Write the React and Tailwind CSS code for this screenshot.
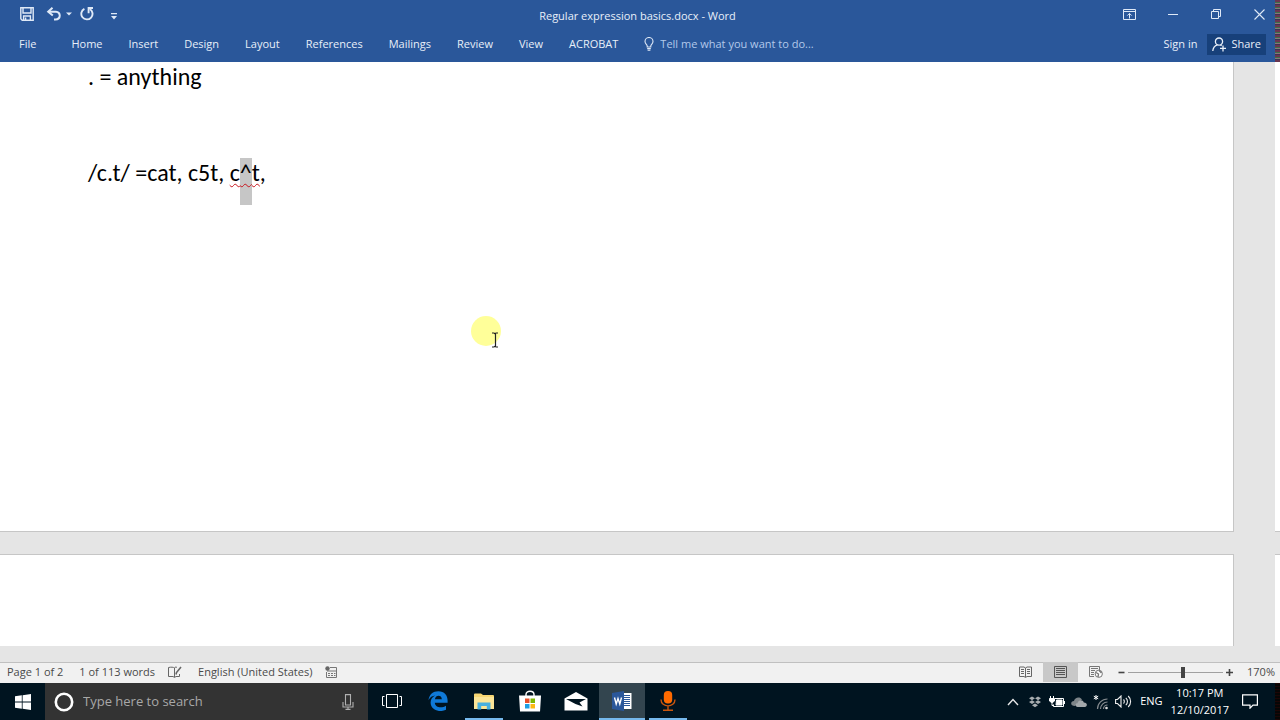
import { useState } from 'react';

const TABS = ['Home', 'Insert', 'Design', 'Layout', 'References', 'Mailings', 'Review', 'View', 'ACROBAT'];

function QuickAccess() {
  return (
    <div className="flex items-center h-7 pl-5 text-[#dfe9f7]">
      <button aria-label="Save">
        <svg className="w-[14px] h-[14px]" viewBox="0 0 14 14" fill="none" stroke="currentColor" strokeWidth="1.4">
          <path d="M0.8 0.8H13.2V13.2H2.2L0.8 11.8Z" />
          <path d="M3 1V6H11V1M3.6 13V9H10.4V13M5.6 10.5V13" />
        </svg>
      </button>
      <button aria-label="Undo" className="ml-3">
        <svg className="w-[16px] h-[14px]" viewBox="0 0 16 14" fill="none" stroke="currentColor" strokeWidth="2">
          <path d="M6.5 0.8L2.2 4.8L6.8 8.6" />
          <path d="M2.6 4.8H10C15 4.8 15.2 12.4 9.4 12.4H8" />
        </svg>
      </button>
      <button aria-label="Undo options" className="ml-1">
        <svg className="w-[6px] h-[4px]" viewBox="0 0 6 4" fill="currentColor">
          <path d="M0 0.4H6L3 3.4Z" />
        </svg>
      </button>
      <button aria-label="Repeat" className="ml-2">
        <svg className="w-[14px] h-[14px]" viewBox="0 0 14 14" fill="none" stroke="currentColor" strokeWidth="1.9">
          <path d="M4.4 1.8A5.6 5.6 0 1 0 9.8 2" />
          <path d="M13 1H8.6V6.2" />
        </svg>
      </button>
      <button aria-label="Customize toolbar" className="ml-[17px] pt-1">
        <svg className="w-[6px] h-[7px]" viewBox="0 0 6 7" fill="currentColor">
          <path d="M0 0H6V1.2H0ZM0 3H6L3 6.4Z" />
        </svg>
      </button>
    </div>
  );
}

function WindowButtons() {
  return (
    <div className="flex items-center justify-end h-7 pr-[10px] text-[#dfe9f7]">
      <button aria-label="Ribbon display options">
        <svg className="w-[13px] h-[11px]" viewBox="0 0 13 11" fill="none" stroke="currentColor">
          <path d="M0.5 0.5H12.5V10.5H0.5ZM0.5 2.5H12.5M6.5 9.5V4.5M4.3 6.6L6.5 4.4L8.7 6.6" />
        </svg>
      </button>
      <button aria-label="Minimize" className="ml-8">
        <svg className="w-[10px] h-[10px]" viewBox="0 0 10 10" stroke="currentColor">
          <path d="M0 5.5H10" />
        </svg>
      </button>
      <button aria-label="Restore" className="ml-[33px]">
        <svg className="w-[10px] h-[10px]" viewBox="0 0 10 10" fill="none" stroke="currentColor">
          <path d="M0.5 2.5H7.5V9.5H0.5ZM2.5 2.5V0.5H9.5V7.5H7.5" />
        </svg>
      </button>
      <button aria-label="Close" className="ml-[33px]">
        <svg className="w-[11px] h-[11px]" viewBox="0 0 11 11" stroke="currentColor" strokeWidth="1.1">
          <path d="M0.5 0.5L10.5 10.5M10.5 0.5L0.5 10.5" />
        </svg>
      </button>
    </div>
  );
}

function Header() {
  return (
    <header className="flex bg-[#2a579a] text-[11px] leading-4 text-[#e8eff9]">
      <div className="flex-1 min-w-0 h-[62px]">
        <div className="grid grid-cols-[1fr_auto_1fr] h-8">
          <QuickAccess />
          <h1 className="pt-2">Regular expression basics.docx - Word</h1>
          <WindowButtons />
        </div>
        <div className="flex items-center h-6">
          <button className="ml-[19px] mr-[22px]">File</button>
          <nav className="flex">
            {TABS.map((t) => (
              <button key={t} className="px-[13px]">{t}</button>
            ))}
          </nav>
          <label className="flex items-center gap-[6px] ml-[13px] text-[#b3c9ea]">
            <svg className="w-[10px] h-[14px]" viewBox="0 0 10 14" fill="none" stroke="#dfe9f7" strokeWidth="1.1">
              <path d="M3.2 10V9C3.2 7.6 1 6.8 1 4.4A4 3.9 0 0 1 9 4.4C9 6.8 6.8 7.6 6.8 9V10ZM3.2 11.6H6.8M3.6 13.2H6.4" />
            </svg>
            <input
              type="text"
              aria-label="Tell me"
              placeholder="Tell me what you want to do..."
              className="w-48 bg-transparent placeholder:text-[#b3c9ea] outline-none"
            />
          </label>
          <button className="ml-auto mr-[10px]">Sign in</button>
          <button className="flex items-center gap-1 h-[21px] px-[5px] mr-[9px] bg-[#17407a]">
            <svg className="w-[15px] h-[15px]" viewBox="0 0 15 15" fill="none" stroke="currentColor" strokeWidth="1.3">
              <circle cx="7" cy="4.6" r="3.6" />
              <path d="M0.8 14C1 10.6 3 8.6 5.4 7.8M8.4 7.8L9.6 8.8M11 8.4V14.4M8 11.4H14" />
            </svg>
            Share
          </button>
        </div>
      </div>
      <div className="w-[5px] bg-[repeating-linear-gradient(#6a3550_0px_2px,#3f7046_2px_3px,#8a6f7c_3px_4px,#3c3550_4px_5px)]" />
    </header>
  );
}

function Document() {
  return (
    <main className="relative flex-1 min-h-0 flex flex-col gap-[22px] overflow-hidden bg-[#e5e5e5] font-[Carlito,Lato,sans-serif] text-[24px] leading-8 text-black">
      <div className="flex h-[470px] shrink-0">
        <article className="flex-1 bg-white border-r border-b border-[#c6c6c6] pl-[88px] -mt-px">
          <p className="h-24">. = anything</p>
          <p>
            /c.t/ =cat, c5t,{' '}
            <span className="underline decoration-wavy decoration-[#c8141c] decoration-1 underline-offset-2 [text-decoration-skip-ink:none]">
              c<span className="bg-[#c6c6c6] pb-[18px]">^</span>t
            </span>
            ,
          </p>
        </article>
        <div className="w-[41px]" />
        <div className="w-[5px] bg-white border-b border-[#c6c6c6]" />
      </div>
      <div className="flex flex-1">
        <article className="flex-1 bg-white border-r border-t border-[#c6c6c6]" />
        <div className="w-[41px]" />
        <div className="w-[5px] bg-white border-t border-[#c6c6c6]" />
      </div>
      <div className="absolute left-[471px] top-[254px] size-[30px] rounded-full bg-[#ffff99]" />
      <svg className="absolute left-[491px] top-[270px] w-[8px] h-[16px]" viewBox="0 0 8 16" fill="none" stroke="#222" strokeWidth="1.2">
        <path d="M1 1H3L4 1.8L5 1H7M4.5 1.5V14.5M1 15H3L4 14.2L5 15H7" />
      </svg>
    </main>
  );
}

function StatusBar() {
  const [zoom, setZoom] = useState(170);
  return (
    <div className="flex items-center h-[21px] shrink-0 pl-[7px] pr-[5px] pb-[2px] bg-[#f1f1f1] border-t border-[#c0c0c0] text-[11px] leading-4 text-[#4a4a4a]">
      <button>Page 1 of 2</button>
      <button className="ml-4">1 of 113 words</button>
      <button aria-label="Proofing" className="ml-[13px]">
        <svg className="w-[14px] h-[12px]" viewBox="0 0 14 12" fill="none" stroke="#666">
          <path d="M9 1.5C8 0.8 7 1 6.5 2C5.5 1 3 1 0.5 1.5V10.5H5L6.5 11.5L8 10.5H11.5V8M6.5 2V11" />
          <path d="M13 1L8.5 6.5L8 8.5" strokeWidth="1.6" />
        </svg>
      </button>
      <button className="ml-4">English (United States)</button>
      <button aria-label="Macros" className="ml-[13px]">
        <svg className="w-[12px] h-[12px]" viewBox="0 0 12 12" fill="none" stroke="#777">
          <path d="M5 1.5H11.5V11.5H1.5V6M2 5H11M3 7.5H5M6 7.5H8M9 7.5H10.5M3 9.5H5M6 9.5H8M9 9.5H10.5" />
          <circle cx="2.5" cy="2.5" r="2.2" fill="#666" stroke="none" />
        </svg>
      </button>
      <div className="flex items-center ml-auto">
        <button aria-label="Read mode" className="w-9 h-5 flex items-center justify-center">
          <svg className="w-[13px] h-[12px]" viewBox="0 0 13 12" fill="none" stroke="#666">
            <path d="M6.5 2L5 1H0.5V10.5H5L6.5 11.5L8 10.5H12.5V1H8ZM6.5 2V11M2 3.5H5M2 5.5H5M2 7.5H5M8 3.5H11M8 5.5H11M8 7.5H11" />
          </svg>
        </button>
        <button aria-label="Print layout" className="w-[35px] h-5 flex items-center justify-center bg-[#c8c8c8]">
          <svg className="w-[13px] h-[12px]" viewBox="0 0 13 12" fill="none" stroke="#555">
            <path d="M0.5 0.5H12.5V11.5H0.5ZM2 2.5H11M2 4.5H11M2 6.5H11M2 8.5H11" />
          </svg>
        </button>
        <button aria-label="Web layout" className="w-9 h-5 flex items-center justify-center">
          <svg className="w-[14px] h-[12px]" viewBox="0 0 14 12" fill="none" stroke="#777">
            <path d="M5 10.5H0.5V0.5H10.5V4M2 2.5H9M2 4.5H6M2 6.5H5M2 8.5H5" />
            <circle cx="9.8" cy="7.8" r="3.6" fill="#fff" />
            <path d="M7 6.5L9.5 8L9 11M10 4.5L12.5 7" strokeWidth="1.4" />
          </svg>
        </button>
        <button aria-label="Zoom out" className="ml-1">
          <svg className="w-[7px] h-[7px]" viewBox="0 0 7 7" stroke="#444" strokeWidth="1.6"><path d="M0.5 3.5H6.5" /></svg>
        </button>
        <input
          type="range"
          min="10"
          max="284"
          value={zoom}
          aria-label="Zoom"
          onChange={(e) => setZoom(Number(e.target.value))}
          className="w-[95px] h-[11px] mx-[3px] appearance-none bg-[linear-gradient(#a0a0a0,#a0a0a0)] bg-[length:100%_1px] bg-center bg-no-repeat [&::-webkit-slider-thumb]:appearance-none [&::-webkit-slider-thumb]:w-1 [&::-webkit-slider-thumb]:h-[11px] [&::-webkit-slider-thumb]:bg-[#444]"
        />
        <button aria-label="Zoom in">
          <svg className="w-[7px] h-[7px]" viewBox="0 0 7 7" stroke="#444" strokeWidth="1.6"><path d="M0 3.5H7M3.5 0V7" /></svg>
        </button>
        <button className="ml-[14px]">{zoom}%</button>
      </div>
    </div>
  );
}

function Tray() {
  return (
    <div className="flex items-center ml-auto">
      <button aria-label="Show hidden icons">
        <svg className="w-[12px] h-[8px]" viewBox="0 0 12 8" fill="none" stroke="#e8e8e8" strokeWidth="1.4"><path d="M1 7L6 1.5L11 7" /></svg>
      </button>
      <svg className="w-[12px] h-[12px] ml-[10px]" viewBox="0 0 12 12" fill="#a8adb0">
        <path d="M3 0.4L6 2.3L3 4.2L0 2.3ZM9 0.4L12 2.3L9 4.2L6 2.3ZM3 4.2L6 6.1L3 8L0 6.1ZM9 4.2L12 6.1L9 8L6 6.1ZM6 7.4L9 9.3L6 11.2L3 9.3Z" />
      </svg>
      <svg className="w-[16px] h-[12px] ml-2" viewBox="0 0 16 12" fill="none" stroke="#fff">
        <path d="M6 2.5H14.5V10.5H4.5V8.5M15.5 5V8" />
        <path d="M7.5 4H13V9H7Z" fill="#fff" />
        <path d="M1.5 0V2M4.5 0V2M0.5 2.5H5.5V5L3.5 6.5H2.5L0.5 5Z" fill="#fff" />
        <path d="M3 6V9.5H5" />
      </svg>
      <svg className="w-[16px] h-[10px] ml-[6px]" viewBox="0 0 16 10">
        <path d="M4 9C-1 9-0.8 4.2 3 4C3.6 0.4 9 -1 11 2.6L7 6Z" fill="#7e8589" />
        <path d="M6.6 10C3.8 9.6 4 6.2 6.6 6C7.4 2.6 12 2.4 12.8 5.4C16.6 5.4 16.8 9.6 13.8 10Z" fill="#a3a8ab" />
      </svg>
      <svg className="w-[16px] h-[16px] ml-[6px]" viewBox="0 0 16 16" fill="none">
        <path d="M3 1V6M0.8 2.2L5.2 4.8M5.2 2.2L0.8 4.8" stroke="#fff" />
        <path d="M4.5 15A10 10 0 0 1 14.5 5M7.5 15A7 7 0 0 1 14.5 8M10.5 15A4 4 0 0 1 14.5 11" stroke="#858b8f" strokeWidth="1.2" />
        <circle cx="13.5" cy="14" r="1.3" fill="#ddd" />
      </svg>
      <svg className="w-[17px] h-[13px] ml-[6px]" viewBox="0 0 17 13" fill="none" stroke="#eee" strokeWidth="1.1">
        <path d="M0.6 4.5H2.5L6 1V12L2.5 8.5H0.6ZM8.5 4.5C9.6 5.6 9.6 7.4 8.5 8.5M10.8 2.8C13 4.8 13 8.2 10.8 10.2M13.2 1C16.4 4 16.4 9 13.2 12" />
      </svg>
      <button className="ml-2 text-[11px]">ENG</button>
      <button className="ml-2 pb-[2px] text-[11px] leading-[17px] text-center">
        <span className="block">10:17 PM</span>
        <span className="block">12/10/2017</span>
      </button>
      <button aria-label="Notifications" className="ml-[13px] mr-[17px]">
        <svg className="w-[16px] h-[15px]" viewBox="0 0 16 15" fill="none" stroke="#fff" strokeWidth="1.2">
          <path d="M0.6 0.8H15.4V11.2H11L8 14.2V11.2H0.6Z" />
        </svg>
      </button>
      <div className="w-[5px] h-[37px] bg-[repeating-linear-gradient(#1c0606_0px_1px,#060606_1px_3px)]" />
    </div>
  );
}

function TaskApp({ label, children, open, active }) {
  return (
    <button
      aria-label={label}
      className={`flex items-center justify-center w-[46px] h-full ${active ? 'bg-[#33454f]' : ''}`}
    >
      <span
        className={`flex items-center justify-center h-full border-b-2 pt-px ${active ? 'w-full' : 'w-[38px]'} ${open ? 'border-[#76b9ed]' : 'border-transparent'}`}
      >
        {children}
      </span>
    </button>
  );
}

function Taskbar() {
  return (
    <footer className="flex items-center h-[37px] shrink-0 bg-[#001420] text-white">
      <button aria-label="Start" className="w-[45px] flex justify-center">
        <svg className="w-[16px] h-[16px]" viewBox="0 0 16 16" fill="#fff">
          <path d="M0 2.3L6.8 1.3V7.6H0ZM7.6 1.2L16 0V7.6H7.6ZM0 8.4H6.8V14.7L0 13.7ZM7.6 8.4H16V16L7.6 14.8Z" />
        </svg>
      </button>
      <label className="flex items-center w-[323px] h-full bg-[#333333] pl-[9px] pr-[14px]">
        <svg className="w-[20px] h-[20px]" viewBox="0 0 20 20" fill="none" stroke="#fff" strokeWidth="2.6"><circle cx="10" cy="10" r="8.2" /></svg>
        <input
          type="text"
          aria-label="Search"
          placeholder="Type here to search"
          className="flex-1 min-w-0 ml-[9px] bg-transparent text-[13px] placeholder:text-[#a8a8a8] outline-none"
        />
        <svg className="w-[12px] h-[16px]" viewBox="0 0 12 16" fill="none" stroke="#b0b0b0" strokeWidth="1.1">
          <path d="M3.5 0.6H8.5V11H3.5ZM1 8V13H11V8M6 13V15.4M3.5 15.4H8.5" />
        </svg>
      </label>
      <div className="flex h-full pl-px">
        <TaskApp label="Task view">
          <svg className="w-[20px] h-[14px]" viewBox="0 0 20 14" fill="none" stroke="#fff">
            <path d="M4.5 0.5H15.5V13.5H4.5ZM2.5 2.5H0.5V11.5H2.5M17.5 2.5H19.5V11.5H17.5" />
          </svg>
        </TaskApp>
        <TaskApp label="Edge">
          <svg className="w-[20px] h-[20px]" viewBox="0 0 20 20" fill="#0f7ad8">
            <path d="M0.5 9.2C1.2 3.6 5 0.3 10.3 0.3C16.4 0.3 19.6 4.4 19.6 9.6V11.8H6.8C7.2 16.8 13.8 17.4 18 14.8V18.8C11 22 2.6 19 2.6 11.6C2.6 8.4 4.4 5.8 7.2 4.6C4.2 4.8 2 6.4 0.5 9.2ZM6.9 8.3H13.8C13.8 3.8 7.6 3.6 6.9 8.3Z" />
          </svg>
        </TaskApp>
        <TaskApp label="File Explorer" open>
          <svg className="w-[20px] h-[17px]" viewBox="0 0 20 17">
            <path d="M0 1.5Q0 0.5 1 0.5H7L9 2H19Q20 2 20 3V16H0Z" fill="#f6d673" />
            <path d="M0 4H20V16H0Z" fill="#fbe597" />
            <path d="M3.5 16.5V9.5H16.5V16.5H12.8V13H7.2V16.5Z" fill="#48b0df" />
          </svg>
        </TaskApp>
        <TaskApp label="Store">
          <svg className="w-[22px] h-[22px]" viewBox="0 0 22 22">
            <path d="M7 6V4.5C7 0.2 15 0.2 15 4.5V6" fill="none" stroke="#fff" strokeWidth="1.4" />
            <path d="M0 5.5H22L21 21.4H1Z" fill="#fff" />
            <path d="M6 8.5H10.5V13H6Z" fill="#e8502b" />
            <path d="M11.5 8.5H16V13H11.5Z" fill="#7db700" />
            <path d="M6 14H10.5V18.5H6Z" fill="#1d9fe4" />
            <path d="M11.5 14H16V18.5H11.5Z" fill="#fcb813" />
          </svg>
        </TaskApp>
        <TaskApp label="Mail">
          <svg className="w-[24px] h-[19px]" viewBox="0 0 24 19">
            <path d="M0.5 6.5L12 0L23.5 6.5V18.5H0.5Z" fill="#fff" />
            <path d="M2 7H22L15.5 10.5L18.5 14.5L11.5 12Z" fill="#001420" />
          </svg>
        </TaskApp>
        <TaskApp label="Word" open active>
          <svg className="w-[20px] h-[20px]" viewBox="0 0 20 20">
            <path d="M10 2H19.5V18H10Z" fill="#fff" />
            <path d="M12 4.5H18M12 6.5H18M12 8.5H18M12 10.5H18M12 12.5H18M12 14.5H18" stroke="#2a579a" />
            <path d="M0 2L12 0V20L0 18Z" fill="#2a579a" />
            <path d="M2.5 6.5L4.2 13L6 7.5L7.8 13L9.5 6.5" fill="none" stroke="#fff" strokeWidth="1.4" />
          </svg>
        </TaskApp>
        <TaskApp label="Voice recorder" open>
          <svg className="w-[16px] h-[20px]" viewBox="0 0 16 20" fill="none" stroke="#c9560f" strokeWidth="1.4">
            <rect x="3.8" y="0" width="8.4" height="12.5" rx="4" fill="#ff6a00" stroke="none" />
            <path d="M1 8.5C1 17 15 17 15 8.5M8 15V19M3 19.2H13" />
          </svg>
        </TaskApp>
      </div>
      <Tray />
    </footer>
  );
}

export default function App() {
  return (
    <div className="h-screen flex flex-col overflow-hidden bg-[#e5e5e5] font-['Open_Sans',sans-serif]">
      <Header />
      <Document />
      <div className="h-4 shrink-0 bg-[#e5e5e5]" />
      <StatusBar />
      <Taskbar />
    </div>
  );
}
